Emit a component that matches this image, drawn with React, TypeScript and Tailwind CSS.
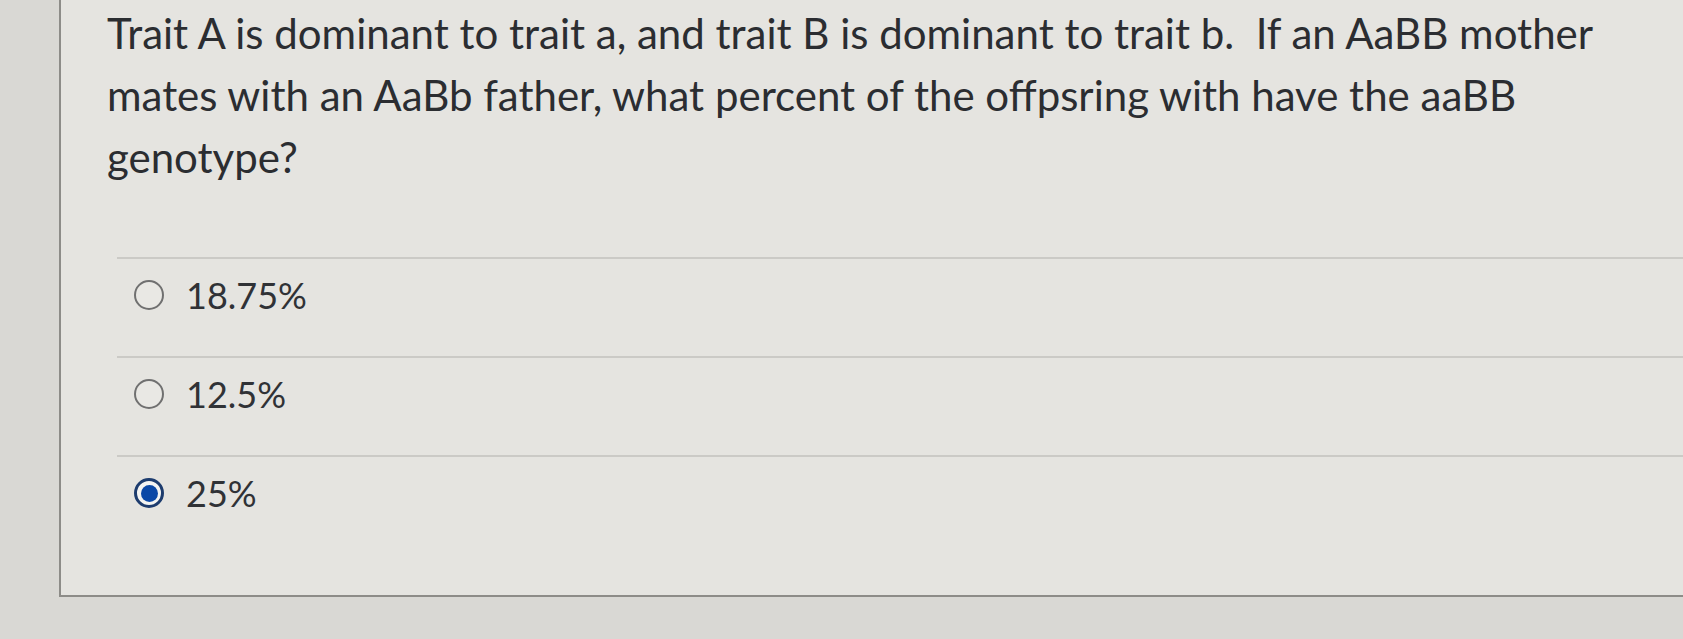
import React from 'react';

const OPTIONS = [
  { label: '18.75%', selected: false },
  { label: '12.5%', selected: false },
  { label: '25%', selected: true },
];

function Radio({ selected }: { selected: boolean }) {
  if (selected) {
    return (
      <span className="flex h-[30px] w-[30px] items-center justify-center rounded-full border-[3px] border-[#1d3c6e] bg-[#f4f4f2]">
        <span className="h-[17px] w-[17px] rounded-full bg-[#0b48a6]" />
      </span>
    );
  }
  return <span className="block h-[30px] w-[30px] rounded-full border-2 border-[#707070] bg-[#e9e8e4]" />;
}

export default function App() {
  return (
    <div className="h-[639px] w-[1683px] overflow-hidden bg-[#d9d8d4] font-['Lato','Noto_Sans',sans-serif] text-[#2b2d31]">
      <div className="ml-[59px] h-[597px] border-b-2 border-l-2 border-[#8d8c88] bg-[#e5e4e0]">
        <p className="whitespace-nowrap pl-[46px] pt-[2px] text-[42px] leading-[62px]">
          Trait A is dominant to trait a, and trait B is dominant to trait b.&nbsp; If an AaBB mother
          <br />
          mates with an AaBb father, what percent of the offpsring with have the aaBB
          <br />
          genotype?
        </p>
        <ul className="ml-[56px] mt-[69px]">
          {OPTIONS.map((o) => (
            <li key={o.label} className="flex h-[99px] items-start border-t-2 border-[#cbcac6] pl-[17px] pt-[21px]">
              <div className="flex items-center gap-[22px]">
                <Radio selected={o.selected} />
                <span className="text-[36px] leading-[30px] text-[#303236]">{o.label}</span>
              </div>
            </li>
          ))}
        </ul>
      </div>
    </div>
  );
}
